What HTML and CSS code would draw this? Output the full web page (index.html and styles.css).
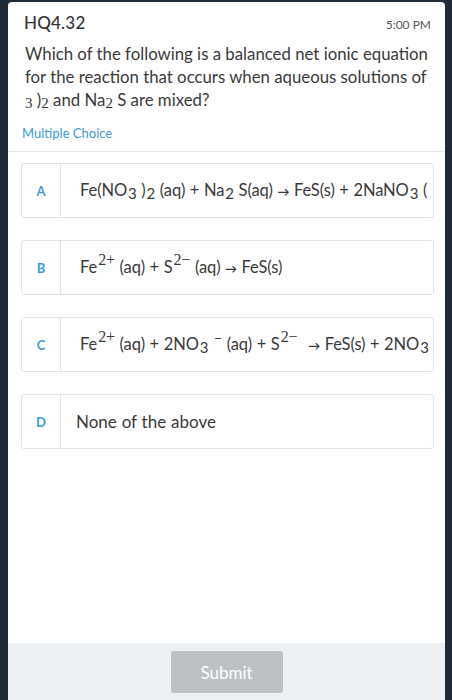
FILE: index.html
```html
<!DOCTYPE html>
<html>
<head>
<meta charset="utf-8">
<link rel="stylesheet" href="styles.css">
</head>
<body>
<div class="card">
  <div class="main">
    <div class="header">
      <div class="title">HQ4.32</div>
      <div class="time">5:00 PM</div>
    </div>
    <div class="question">Which of the following is a balanced net ionic equation<br>for the reaction that occurs when aqueous solutions of<br><span class="sub-s">3</span> )<span class="sub-s">2</span> and Na<span class="sub-s">2</span> S are mixed?</div>
    <div class="type">Multiple Choice</div>
    <div class="options">
      <div class="option">
        <div class="letter">A</div>
        <div class="text">Fe(NO<span class="sb">3</span> )<span class="sb">2</span> (aq) + Na<span class="sb">2</span> S(aq) <span class="arr">→</span> FeS(s) + 2NaNO<span class="sb">3</span> (</div>
      </div>
      <div class="option">
        <div class="letter">B</div>
        <div class="text">Fe<span class="sp">2+</span> (aq) + S<span class="sp">2−</span> (aq) <span class="arr">→</span> FeS(s)</div>
      </div>
      <div class="option">
        <div class="letter">C</div>
        <div class="text">Fe<span class="sp">2+</span> (aq) + 2NO<span class="sb">3</span> <span class="sp minus">−</span> (aq) + S<span class="sp">2−</span> <span class="arr arr-c">→</span> FeS(s) + 2NO<span class="sb">3</span></div>
      </div>
      <div class="option opt-d">
        <div class="letter">D</div>
        <div class="text">None of the above</div>
      </div>
    </div>
  </div>
  <div class="footer">
    <div class="submit">Submit</div>
  </div>
</div>
</body>
</html>
```
FILE: styles.css
```css
html, body {
  margin: 0;
  padding: 0;
}
body {
  background: #1f2c37;
  width: 452px;
  height: 700px;
  overflow: hidden;
  font-family: Lato, "Noto Sans", sans-serif;
}
.card {
  margin: 2px 7px 0 8px;
  height: 698px;
  background: #fff;
  border-radius: 4px 4px 0 0;
  display: flex;
  flex-direction: column;
}
.main {
  flex: 1;
}
.header {
  display: flex;
  justify-content: space-between;
  align-items: baseline;
  padding: 10px 14px 0 16px;
}
.title {
  font-size: 17px;
  color: #333;
  font-weight: 500;
  letter-spacing: 0.2px;
}
.time {
  font-size: 12px;
  color: #555;
}
.question {
  padding: 9px 10px 0 17px;
  font-size: 16.8px;
  line-height: 23px;
  color: #3a3a3a;
  white-space: nowrap;
}
.sub-s {
  font-family: "Liberation Serif", serif;
  font-size: 15px;
  position: relative;
  top: 2px;
}
.type {
  padding: 12px 0 0 14px;
  font-size: 13px;
  line-height: 16px;
  color: #3d9ad9;
  height: 26px;
  border-bottom: 1px solid #e6e9eb;
}
.options {
  padding: 11px 11px 0 13px;
  display: flex;
  flex-direction: column;
  gap: 22px;
}
.option {
  display: flex;
  height: 53px;
  border: 1px solid #e1e4e6;
  border-radius: 3px;
}
.letter {
  width: 38px;
  border-right: 1px solid #e1e4e6;
  display: flex;
  align-items: center;
  justify-content: center;
  font-size: 13px;
  font-weight: 700;
  color: #3d9ad9;
}
.text {
  display: block;
  line-height: 53px;
  padding-left: 19px;
  font-size: 16.5px;
  letter-spacing: -0.1px;
  word-spacing: 0.5px;
  color: #3a3a3a;
  white-space: nowrap;
  overflow: hidden;
}
.opt-d .text {
  padding-left: 15px;
  font-size: 17px;
  letter-spacing: 0;
}
.sb {
  font-size: 15px;
  position: relative;
  top: 3px;
  margin-left: 1px;
}
.sp {
  font-family: "Liberation Serif", serif;
  font-size: 16px;
  position: relative;
  top: -8px;
  margin-left: 1px;
}
.sp.minus {
  font-family: Lato, sans-serif;
  font-size: 14px;
  top: -7px;
}
.arr {
  font-size: 12px;
  font-weight: 700;
}
.arr-c {
  margin-left: 6px;
}
.footer {
  height: 57px;
  background: #edf1f4;
  display: flex;
  justify-content: center;
  align-items: flex-start;
}
.submit {
  margin-top: 8px;
  width: 112px;
  height: 42px;
  background: #bbc1c4;
  border-radius: 3px;
  color: #fff;
  font-size: 17px;
  display: flex;
  align-items: center;
  justify-content: center;
}
```
